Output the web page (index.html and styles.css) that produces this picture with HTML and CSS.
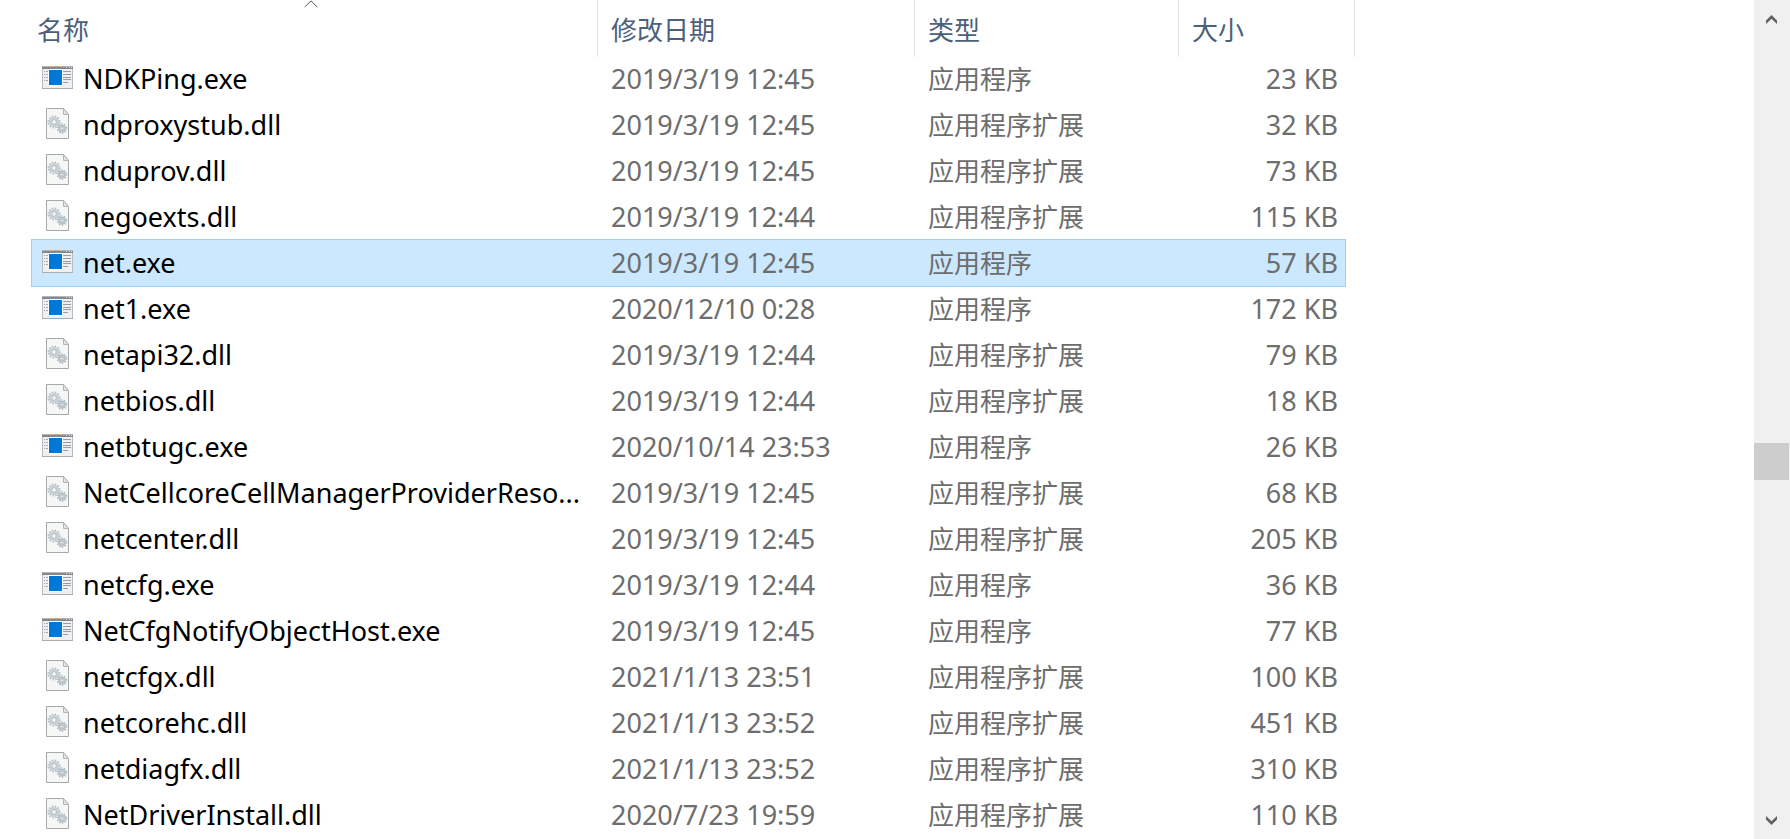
FILE: index.html
```html
<!DOCTYPE html>
<html lang="zh-Hans">
<head>
  <meta charset="UTF-8">
  <title>System32</title>
  <link rel="stylesheet" href="styles.css">
</head>
<body>

  <!-- 图标 -->
  <svg class="sprite" aria-hidden="true">
    <symbol id="exe" viewBox="0 0 32 32">
      <rect x="1.5" y="4.5" width="30" height="22" fill="#eef0f1" stroke="#b9bdc1"/>
      <rect x="1" y="4" width="31" height="1" fill="#b4b6b8"/>
      <rect x="1" y="5" width="31" height="2" fill="#85898d"/>
      <path d="M25 5h1v1h-1zM28 5h1v1h-1zM30 5h1v1h-1z" fill="#d5d8da"/>
      <rect x="1" y="26" width="31" height="1" fill="#a9adb1"/>
      <rect x="7" y="7" width="15" height="17" fill="#fff"/>
      <rect x="8" y="8" width="13" height="15" fill="#0078d7"/>
      <path d="M3 9.500h1M5 9.500h2M3 12.500h1M5 12.500h2M3 15.500h1M5 15.500h2M3 18.500h1M5 18.500h2" stroke="#a4a8ac"/>
      <path d="M22 9.500h8M22 12.500h8M22 15.500h8M22 17.500h8M22 20.500h5" stroke="#9a9ea2"/>
    </symbol>
    <symbol id="dll" viewBox="0 0 32 32">
      <path d="M5.500 .5h17l5 6v24h-22z" fill="#f5f6f6" stroke="#a6a8aa"/>
      <path d="M22.500 .5v6h5z" fill="#e2e4e6" stroke="#b2b5b8"/>
      <circle cx="13" cy="14" r="5.500" fill="none" stroke="#b3bdc5" stroke-width="2" stroke-dasharray="1.440 1.440"/>
      <circle cx="13" cy="14" r="3.700" fill="none" stroke="#c6d0d7" stroke-width="2.600"/>
      <circle cx="13" cy="14" r="2.300" fill="#f5f6f7" stroke="#aab4bb" stroke-width=".8"/>
      <circle cx="21" cy="20.500" r="4.300" fill="none" stroke="#a9b4bc" stroke-width="1.800" stroke-dasharray="1.350 1.350"/>
      <circle cx="21" cy="20.500" r="2.800" fill="none" stroke="#b8c4cc" stroke-width="2.200"/>
      <circle cx="21" cy="20.500" r="1.300" fill="#eef0f1" stroke="#9fabb3" stroke-width=".6"/>
    </symbol>
  </svg>

  <div class="explorer">
    <main class="list">
      <table class="files">
        <thead>
          <tr>
            <th>
              <svg class="sort" viewBox="0 0 14 8" aria-hidden="true"><path d="M.7 7 7 .9 13.300 7" fill="none" stroke="#555"/></svg>
              <button type="button">名称</button>
            </th>
            <th><button type="button">修改日期</button></th>
            <th><button type="button">类型</button></th>
            <th><button type="button">大小</button></th>
          </tr>
        </thead>
        <tbody>
          <tr><td><svg class="icon"><use href="#exe"/></svg><span>NDKPing.exe</span></td><td>2019/3/19 12:45</td><td>应用程序</td><td>23 KB</td></tr>
          <tr><td><svg class="icon"><use href="#dll"/></svg><span>ndproxystub.dll</span></td><td>2019/3/19 12:45</td><td>应用程序扩展</td><td>32 KB</td></tr>
          <tr><td><svg class="icon"><use href="#dll"/></svg><span>nduprov.dll</span></td><td>2019/3/19 12:45</td><td>应用程序扩展</td><td>73 KB</td></tr>
          <tr><td><svg class="icon"><use href="#dll"/></svg><span>negoexts.dll</span></td><td>2019/3/19 12:44</td><td>应用程序扩展</td><td>115 KB</td></tr>
          <tr class="selected"><td><svg class="icon"><use href="#exe"/></svg><span>net.exe</span></td><td>2019/3/19 12:45</td><td>应用程序</td><td>57 KB</td></tr>
          <tr><td><svg class="icon"><use href="#exe"/></svg><span>net1.exe</span></td><td>2020/12/10 0:28</td><td>应用程序</td><td>172 KB</td></tr>
          <tr><td><svg class="icon"><use href="#dll"/></svg><span>netapi32.dll</span></td><td>2019/3/19 12:44</td><td>应用程序扩展</td><td>79 KB</td></tr>
          <tr><td><svg class="icon"><use href="#dll"/></svg><span>netbios.dll</span></td><td>2019/3/19 12:44</td><td>应用程序扩展</td><td>18 KB</td></tr>
          <tr><td><svg class="icon"><use href="#exe"/></svg><span>netbtugc.exe</span></td><td>2020/10/14 23:53</td><td>应用程序</td><td>26 KB</td></tr>
          <tr><td><svg class="icon"><use href="#dll"/></svg><span>NetCellcoreCellManagerProviderReso...</span></td><td>2019/3/19 12:45</td><td>应用程序扩展</td><td>68 KB</td></tr>
          <tr><td><svg class="icon"><use href="#dll"/></svg><span>netcenter.dll</span></td><td>2019/3/19 12:45</td><td>应用程序扩展</td><td>205 KB</td></tr>
          <tr><td><svg class="icon"><use href="#exe"/></svg><span>netcfg.exe</span></td><td>2019/3/19 12:44</td><td>应用程序</td><td>36 KB</td></tr>
          <tr><td><svg class="icon"><use href="#exe"/></svg><span>NetCfgNotifyObjectHost.exe</span></td><td>2019/3/19 12:45</td><td>应用程序</td><td>77 KB</td></tr>
          <tr><td><svg class="icon"><use href="#dll"/></svg><span>netcfgx.dll</span></td><td>2021/1/13 23:51</td><td>应用程序扩展</td><td>100 KB</td></tr>
          <tr><td><svg class="icon"><use href="#dll"/></svg><span>netcorehc.dll</span></td><td>2021/1/13 23:52</td><td>应用程序扩展</td><td>451 KB</td></tr>
          <tr><td><svg class="icon"><use href="#dll"/></svg><span>netdiagfx.dll</span></td><td>2021/1/13 23:52</td><td>应用程序扩展</td><td>310 KB</td></tr>
          <tr><td><svg class="icon"><use href="#dll"/></svg><span>NetDriverInstall.dll</span></td><td>2020/7/23 19:59</td><td>应用程序扩展</td><td>110 KB</td></tr>
        </tbody>
      </table>
    </main>

    <div class="scrollbar">
      <button type="button" aria-label="向上滚动">
        <svg viewBox="0 0 11 9"><path d="M0 5.500 5.500 0 11 5.500V9L5.500 3.800 0 9z" fill="#606060"/></svg>
      </button>
      <div class="track"><div class="thumb"></div></div>
      <button type="button" aria-label="向下滚动">
        <svg viewBox="0 0 11 9"><path d="M0 3.500 5.500 9 11 3.500V0L5.500 5.200 0 0z" fill="#606060"/></svg>
      </button>
    </div>
  </div>

</body>
</html>
```
FILE: styles.css
```css
body {
  margin: 0;
  background: #fff;
  color: #6d6d6d;
  font-family: "Noto Sans", "Noto Sans CJK SC", sans-serif;
  font-size: 27px;
}
button {
  border: none;
  padding: 0;
  background: none;
  color: inherit;
  font: inherit;
}
.sprite {
  display: none;
}
.explorer {
  display: flex;
  height: 100vh;
}
.list {
  flex: 1;
  min-width: 0;
  overflow: hidden;
}

/* 文件列表 */
.files,
.files thead,
.files tbody {
  display: block;
  font-size: 27px;
}
.files tr {
  display: grid;
  white-space: nowrap;
}
.files thead {
  height: 56px;
}
.files thead tr {
  grid-template-columns: 574px 317px 264px 176px;
  padding-left: 24px;
}
.files th {
  position: relative;
  box-sizing: border-box;
  height: 57px;
  padding: 4px 13px 0;
  border-right: 1px solid #e5e5e5;
  color: #4c607a;
  font-size: 26px;
  font-weight: normal;
  line-height: 52px;
  text-align: left;
}
.files th button {
  display: block;
  line-height: inherit;
}
.sort {
  position: absolute;
  top: 0;
  left: 50%;
  width: 14px;
  height: 8px;
  transform: translateX(-50%);
}
.files tbody tr {
  grid-template-columns: 566px 317px 264px 166px;
  width: max-content;
  margin-left: 32px;
  line-height: 46px;
}
.files td {
  padding: 0 13px;
}
.files td:first-child {
  display: flex;
  align-items: center;
  gap: 10px;
  padding: 0 9px;
  color: #000;
}
.files td:nth-child(3) {
  font-size: 26px;
}
.files td:last-child {
  padding-right: 7px;
  text-align: right;
}
.files .selected {
  background: #cce8ff;
  outline: 1px solid #99d1ff;
}
.icon {
  flex: none;
  width: 32px;
  height: 32px;
  margin-bottom: 2px;
}

/* 滚动条 */
.scrollbar {
  display: flex;
  flex-direction: column;
  box-sizing: border-box;
  width: 36px;
  padding-right: 1px;
  background: #f0f0f0;
}
.scrollbar button {
  display: flex;
  align-items: center;
  justify-content: center;
  height: 38px;
}
.scrollbar svg {
  width: 11px;
  height: 9px;
}
.track {
  flex: 1;
  display: grid;
  grid-template-rows: 405fr 37px 321fr;
}
.thumb {
  grid-row: 2;
  background: #cdcdcd;
}
```
